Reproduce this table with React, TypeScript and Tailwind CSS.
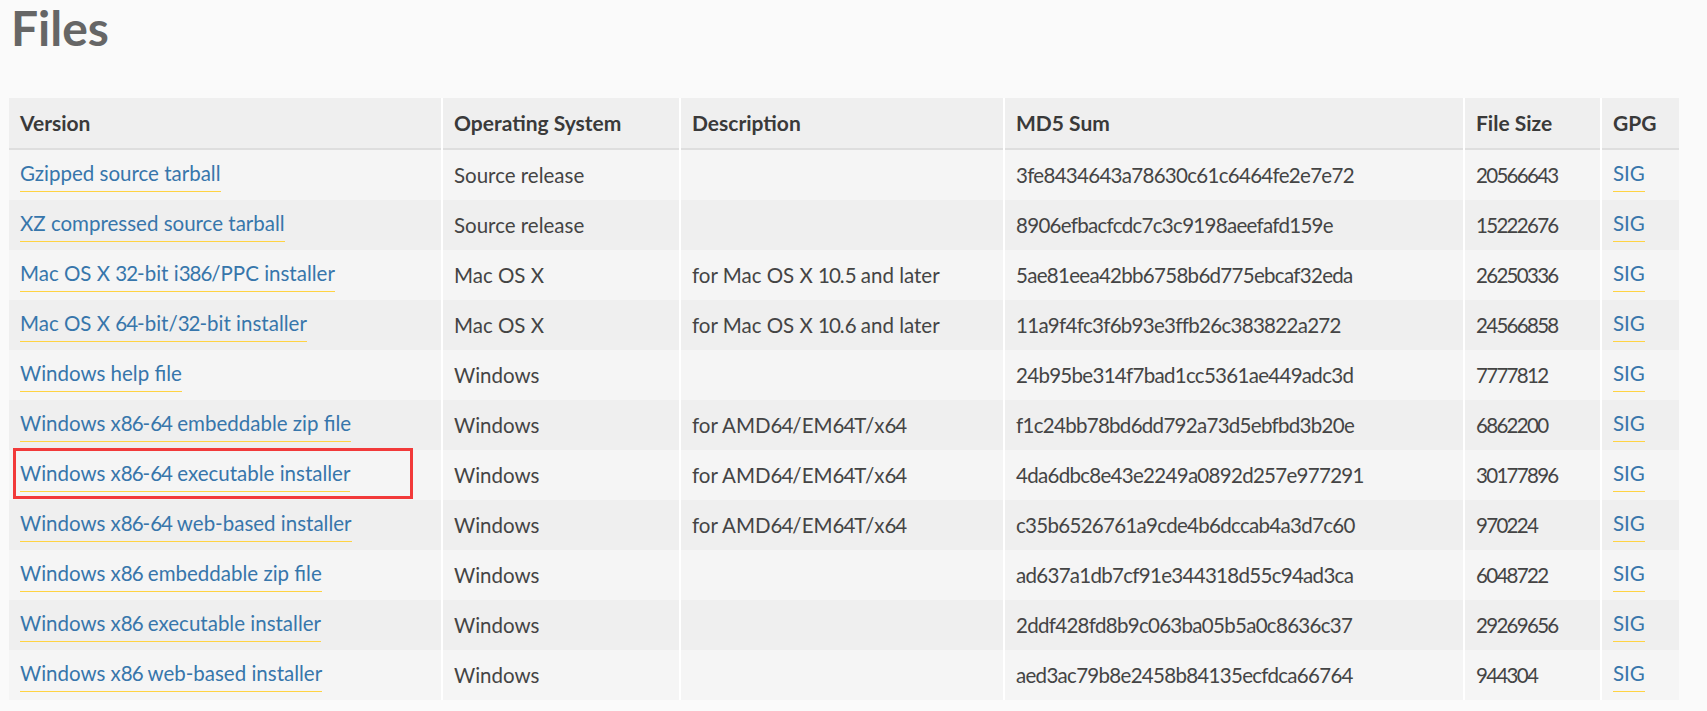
const FILES = [
  ['Gzipped source tarball', 'Source release', '', '3fe8434643a78630c61c6464fe2e7e72', '20566643'],
  ['XZ compressed source tarball', 'Source release', '', '8906efbacfcdc7c3c9198aeefafd159e', '15222676'],
  ['Mac OS X 32-bit i386/PPC installer', 'Mac OS X', 'for Mac OS X 10.5 and later', '5ae81eea42bb6758b6d775ebcaf32eda', '26250336'],
  ['Mac OS X 64-bit/32-bit installer', 'Mac OS X', 'for Mac OS X 10.6 and later', '11a9f4fc3f6b93e3ffb26c383822a272', '24566858'],
  ['Windows help file', 'Windows', '', '24b95be314f7bad1cc5361ae449adc3d', '7777812'],
  ['Windows x86-64 embeddable zip file', 'Windows', 'for AMD64/EM64T/x64', 'f1c24bb78bd6dd792a73d5ebfbd3b20e', '6862200'],
  ['Windows x86-64 executable installer', 'Windows', 'for AMD64/EM64T/x64', '4da6dbc8e43e2249a0892d257e977291', '30177896'],
  ['Windows x86-64 web-based installer', 'Windows', 'for AMD64/EM64T/x64', 'c35b6526761a9cde4b6dccab4a3d7c60', '970224'],
  ['Windows x86 embeddable zip file', 'Windows', '', 'ad637a1db7cf91e344318d55c94ad3ca', '6048722'],
  ['Windows x86 executable installer', 'Windows', '', '2ddf428fd8b9c063ba05b5a0c8636c37', '29269656'],
  ['Windows x86 web-based installer', 'Windows', '', 'aed3ac79b8e2458b84135ecfdca66764', '944304'],
];

const HEADERS = ['Version', 'Operating System', 'Description', 'MD5 Sum', 'File Size', 'GPG'];

const GRID = 'grid grid-cols-[432px_236px_322px_458px_135px_77px] gap-x-[2px]';

// Lato's digits run wider than the original face, so pull them in a bit
function tight(text: string) {
  return text.split(/(\d+)/).map((part, i) =>
    /^\d+$/.test(part) ? <span key={i} className="tracking-[-1px]">{part}</span> : part
  );
}

function Link({ children }: { children: React.ReactNode }) {
  return (
    <a href="#" className="text-[#3776ab] border-b border-[#ffd343] pb-[2px]">
      {children}
    </a>
  );
}

export default function App() {
  return (
    <div className="min-h-screen bg-[#fafafa] font-['Lato',sans-serif] text-[#444]">
      <h1 className="pl-[11px] pt-[4px] text-[48px] leading-[48px] font-bold text-[#666]">Files</h1>

      <div className="mt-[46px] ml-[9px] w-[1670px] bg-white">
        {/* header */}
        <div className={GRID}>
          {HEADERS.map(h => (
            <div key={h} className="h-[52px] flex items-center px-[11px] bg-[#efefef] border-b-2 border-[#dedede] text-[21px] font-bold text-[#3a3a3a]">
              {h}
            </div>
          ))}
        </div>

        {FILES.map(([name, os, desc, md5, size], i) => {
          const bg = i % 2 === 0 ? 'bg-[#f5f5f5]' : 'bg-[#efefef]';
          const cell = `h-[50px] flex items-center px-[11px] text-[20.5px] whitespace-nowrap ${bg}`;
          return (
            <div key={name} className={GRID}>
              <div className={`${cell} relative`}>
                <Link>{tight(name)}</Link>
                {i === 6 && (
                  <div className="absolute left-[4px] top-[-2px] w-[400px] h-[51px] border-[3px] border-[#f23a3a]" />
                )}
              </div>
              <div className={cell}>{os}</div>
              <div className={cell}><span>{tight(desc)}</span></div>
              <div className={`${cell} tracking-[-0.7px]`}>{md5}</div>
              <div className={`${cell} tracking-[-1.7px]`}>{size}</div>
              <div className={cell}><Link>SIG</Link></div>
            </div>
          );
        })}
      </div>
    </div>
  );
}
